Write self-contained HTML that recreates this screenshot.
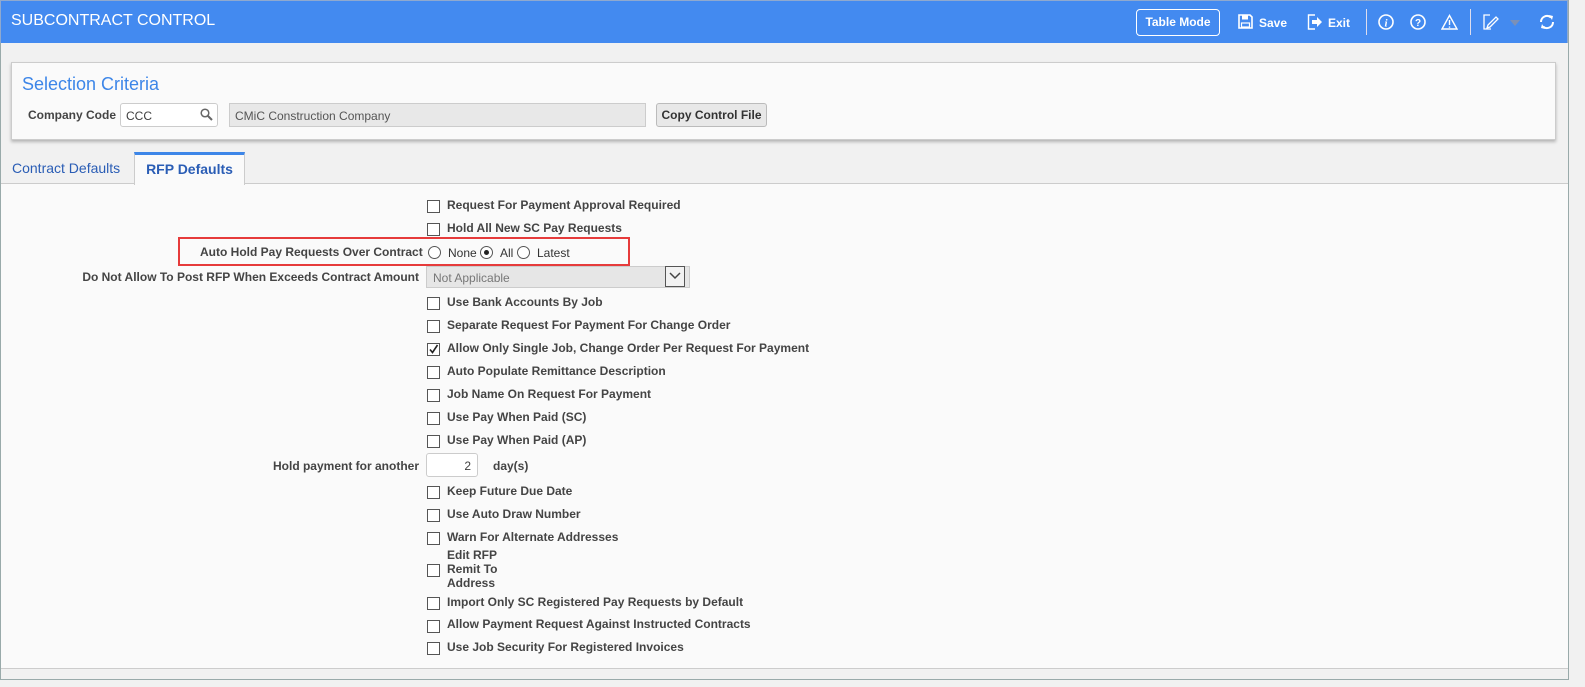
<!DOCTYPE html>
<html><head><meta charset="utf-8"><style>
*{box-sizing:border-box;margin:0;padding:0}
body{width:1585px;height:687px;background:#f1f1f1;font-family:"Liberation Sans",Arial,sans-serif;position:relative;overflow:hidden;color:#3f3f3f}
.a{position:absolute}
#hdr{left:0;top:0;width:1568px;height:43px;background:#438af0;border:1px solid #8fa9cf;border-bottom:none}
.ht{color:#fff;font-size:16px;top:12px;left:11px}
.hb{color:#fff;font-size:12px;font-weight:bold}
.lbl{font-size:12px;font-weight:bold;color:#444;white-space:nowrap}
.cb{width:13px;height:13px;border:1px solid #555;background:#fff}
.rd{width:13px;height:13px;border:1px solid #555;border-radius:50%;background:#fff}
</style></head><body>
<div class="a" style="left:0;top:0;width:1569px;height:680px;border:1px solid #9aa;"></div>
<div id="hdr" class="a"></div>
<div class="a ht">SUBCONTRACT CONTROL</div>
<div class="a hb" style="left:1136px;top:9px;width:84px;height:27px;border:1px solid #fff;border-radius:4px;text-align:center;line-height:25px">Table Mode</div>
<svg class="a" style="left:1238px;top:14px" width="15" height="15" viewBox="0 0 15 15"><path d="M1 1h11l2 2v11H1z" fill="none" stroke="#fff" stroke-width="1.6"/><rect x="4" y="1.5" width="6" height="4" fill="#fff"/><rect x="3.5" y="9" width="8" height="4" fill="none" stroke="#fff" stroke-width="1.2"/></svg>
<div class="a hb" style="left:1259px;top:16px">Save</div>
<svg class="a" style="left:1307px;top:14px" width="16" height="16" viewBox="0 0 16 16"><path d="M8 1H1.5v14H8" fill="none" stroke="#fff" stroke-width="1.4"/><path d="M5 6h5V3l5 5-5 5v-3H5z" fill="#fff"/></svg>
<div class="a hb" style="left:1328px;top:16px">Exit</div>
<div class="a" style="left:1366px;top:9px;width:1px;height:26px;background:#dde"></div>
<svg class="a" style="left:1378px;top:14px" width="16" height="16" viewBox="0 0 16 16"><circle cx="8" cy="8" r="7" fill="none" stroke="#fff" stroke-width="1.6"/><text x="8" y="12.5" text-anchor="middle" font-family="Liberation Serif" font-style="italic" font-weight="bold" font-size="11" fill="#fff">i</text></svg>
<svg class="a" style="left:1410px;top:14px" width="16" height="16" viewBox="0 0 16 16"><circle cx="8" cy="8" r="7" fill="none" stroke="#fff" stroke-width="1.6"/><text x="8" y="12" text-anchor="middle" font-family="Liberation Sans" font-weight="bold" font-size="10" fill="#fff">?</text></svg>
<svg class="a" style="left:1441px;top:14px" width="17" height="16" viewBox="0 0 17 16"><path d="M8.5 1.5L16 15H1z" fill="none" stroke="#fff" stroke-width="1.4"/><path d="M8.5 6v5M8.5 12.5v1.2" stroke="#fff" stroke-width="1.4"/></svg>
<div class="a" style="left:1470px;top:9px;width:1px;height:26px;background:#dde"></div>
<svg class="a" style="left:1482px;top:13px" width="18" height="18" viewBox="0 0 18 18"><path d="M8 2H2v14h7" fill="none" stroke="#fff" stroke-width="1.3"/><path d="M5 15l1-3 8-8 2 2-8 8z" fill="none" stroke="#fff" stroke-width="1.3"/></svg>
<div class="a" style="left:1510px;top:20px;width:0;height:0;border-left:5px solid transparent;border-right:5px solid transparent;border-top:6px solid #7a90b8"></div>
<svg class="a" style="left:1538px;top:13px" width="18" height="18" viewBox="0 0 18 18"><path d="M3 9a6 6 0 0 1 10-4.5M15 9a6 6 0 0 1-10 4.5" fill="none" stroke="#fff" stroke-width="2"/><path d="M11 2l4 1-1 4zM7 16l-4-1 1-4z" fill="#fff"/></svg>

<div class="a" style="left:11px;top:62px;width:1545px;height:78px;background:#fafafa;border:1px solid #ccc;box-shadow:0 2px 3px rgba(0,0,0,.25)"></div>
<div class="a" style="left:22px;top:74px;font-size:18px;color:#3d86e8">Selection Criteria</div>
<div class="a lbl" style="left:28px;top:108px">Company Code</div>
<div class="a" style="left:120px;top:103px;width:98px;height:24px;background:#fff;border:1px solid #ccc;border-radius:3px;font-size:12px;padding:5px 0 0 5px">CCC</div>
<svg class="a" style="left:200px;top:108px" width="13" height="13" viewBox="0 0 13 13"><circle cx="5" cy="5" r="3.8" fill="none" stroke="#666" stroke-width="1.5"/><path d="M8 8l4 4" stroke="#666" stroke-width="2"/></svg>
<div class="a" style="left:229px;top:103px;width:417px;height:24px;background:#e8e8e8;border:1px solid #ccc;font-size:12px;padding:5px 0 0 5px;color:#555">CMiC Construction Company</div>
<div class="a lbl" style="left:656px;top:103px;width:111px;height:24px;background:#e8e8e8;border:1px solid #bbb;border-radius:3px;text-align:center;line-height:22px;color:#333">Copy Control File</div>

<div class="a" style="left:1px;top:183px;width:1567px;height:486px;background:#fafafa;border-top:1px solid #ccc;border-bottom:1px solid #ccc"></div>
<div class="a" style="left:12px;top:160px;font-size:14px;color:#2a5db5">Contract Defaults</div>
<div class="a" style="left:134px;top:152px;width:111px;height:33px;background:#fafafa;border:1px solid #ccc;border-top:3px solid #3d86e8;border-bottom:none;font-size:14px;font-weight:bold;color:#2a5db5;text-align:center;line-height:28px">RFP Defaults</div>

<div class="a" style="left:178px;top:237px;width:452px;height:29px;border:2px solid #e63b3b"></div>

<div class="a cb" style="left:427px;top:200px"></div><div class="a lbl" style="left:447px;top:198px">Request For Payment Approval Required</div>
<div class="a cb" style="left:427px;top:223px"></div><div class="a lbl" style="left:447px;top:221px">Hold All New SC Pay Requests</div>
<div class="a lbl" style="left:200px;top:245px;width:219px;text-align:right">Auto Hold Pay Requests Over Contract</div>
<div class="a rd" style="left:428px;top:246px"></div><div class="a lbl" style="left:448px;top:246px;font-weight:normal;color:#333">None</div>
<div class="a rd" style="left:480px;top:246px"></div><div class="a" style="left:484px;top:250px;width:5px;height:5px;border-radius:50%;background:#222"></div><div class="a lbl" style="left:500px;top:246px;font-weight:normal;color:#333">All</div>
<div class="a rd" style="left:517px;top:246px"></div><div class="a lbl" style="left:537px;top:246px;font-weight:normal;color:#333">Latest</div>
<div class="a lbl" style="left:40px;top:270px;width:379px;text-align:right">Do Not Allow To Post RFP When Exceeds Contract Amount</div>
<div class="a" style="left:426px;top:266px;width:264px;height:22px;background:#e6e6e6;border:1px solid #ccc;font-size:12px;color:#777;padding:4px 0 0 6px">Not Applicable</div>
<div class="a" style="left:665px;top:266px;width:20px;height:21px;border:1px solid #555;background:#f2f2f2"></div>
<svg class="a" style="left:669px;top:272px" width="12" height="8" viewBox="0 0 12 8"><path d="M1 1l5 5 5-5" fill="none" stroke="#444" stroke-width="1.5"/></svg>

<div class="a cb" style="left:427px;top:297px"></div><div class="a lbl" style="left:447px;top:295px">Use Bank Accounts By Job</div>
<div class="a cb" style="left:427px;top:320px"></div><div class="a lbl" style="left:447px;top:318px">Separate Request For Payment For Change Order</div>
<div class="a cb" style="left:427px;top:343px"></div><svg class="a" style="left:428px;top:344px" width="11" height="11" viewBox="0 0 11 11"><path d="M2 5.5l2.5 3L9.5 1" fill="none" stroke="#222" stroke-width="1.6"/></svg><div class="a lbl" style="left:447px;top:341px">Allow Only Single Job, Change Order Per Request For Payment</div>
<div class="a cb" style="left:427px;top:366px"></div><div class="a lbl" style="left:447px;top:364px">Auto Populate Remittance Description</div>
<div class="a cb" style="left:427px;top:389px"></div><div class="a lbl" style="left:447px;top:387px">Job Name On Request For Payment</div>
<div class="a cb" style="left:427px;top:412px"></div><div class="a lbl" style="left:447px;top:410px">Use Pay When Paid (SC)</div>
<div class="a cb" style="left:427px;top:435px"></div><div class="a lbl" style="left:447px;top:433px">Use Pay When Paid (AP)</div>
<div class="a lbl" style="left:200px;top:459px;width:219px;text-align:right">Hold payment for another</div>
<div class="a" style="left:426px;top:453px;width:52px;height:24px;background:#fff;border:1px solid #ccc;border-radius:3px;font-size:12px;text-align:right;padding:5px 6px 0 0">2</div>
<div class="a lbl" style="left:493px;top:459px">day(s)</div>
<div class="a cb" style="left:427px;top:486px"></div><div class="a lbl" style="left:447px;top:484px">Keep Future Due Date</div>
<div class="a cb" style="left:427px;top:509px"></div><div class="a lbl" style="left:447px;top:507px">Use Auto Draw Number</div>
<div class="a cb" style="left:427px;top:532px"></div><div class="a lbl" style="left:447px;top:530px">Warn For Alternate Addresses</div>
<div class="a cb" style="left:427px;top:564px"></div><div class="a lbl" style="left:447px;top:548px;line-height:14px">Edit RFP<br>Remit To<br>Address</div>
<div class="a cb" style="left:427px;top:597px"></div><div class="a lbl" style="left:447px;top:595px">Import Only SC Registered Pay Requests by Default</div>
<div class="a cb" style="left:427px;top:620px"></div><div class="a lbl" style="left:447px;top:617px">Allow Payment Request Against Instructed Contracts</div>
<div class="a cb" style="left:427px;top:642px"></div><div class="a lbl" style="left:447px;top:640px">Use Job Security For Registered Invoices</div>
</body></html>
